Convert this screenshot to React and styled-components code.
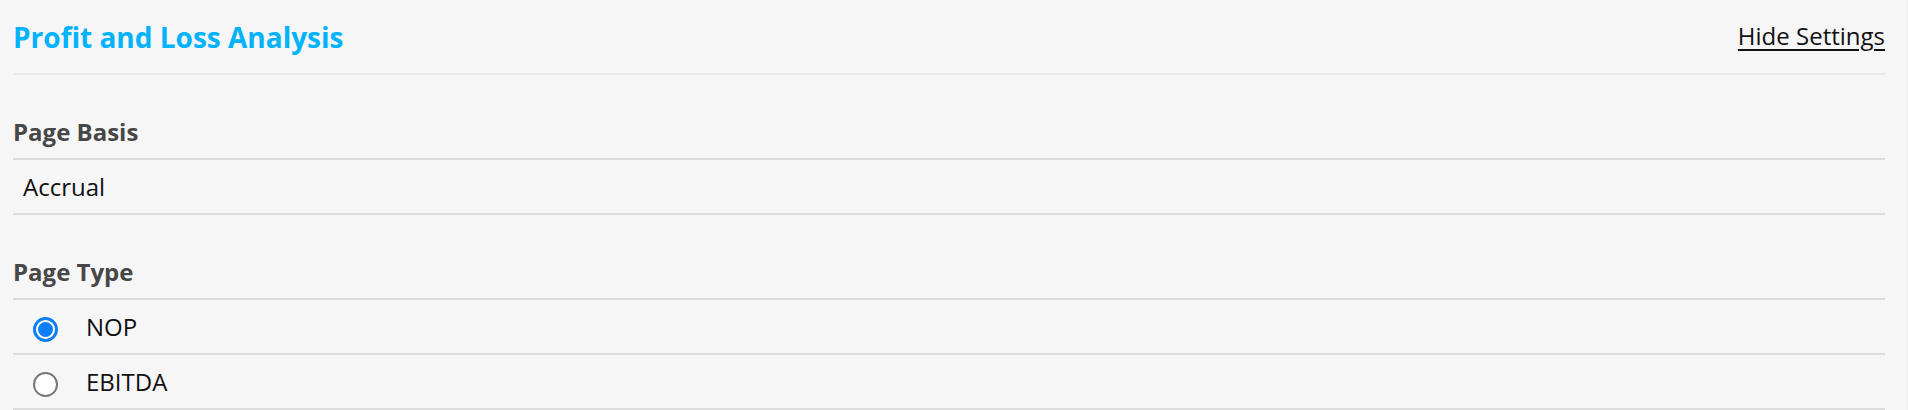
import React, { useState } from "react";
import styled, { createGlobalStyle } from "styled-components";

const GlobalStyle = createGlobalStyle`
  html, body {
    margin: 0;
    padding: 0;
    background: #f6f6f6;
  }
  body {
    font-family: "Open Sans", "Noto Sans", sans-serif;
  }
`;

const Page = styled.div`
  box-sizing: border-box;
  height: 410px;
  padding: 0 22px 0 13px;
  background: #f6f6f6;
  border-right: 1px solid #ececec;
  overflow: hidden;
`;

const Header = styled.div`
  display: flex;
  align-items: center;
  justify-content: space-between;
  height: 73px;
  border-bottom: 2px solid #e9e9e9;
`;

const Title = styled.h1`
  margin: 0;
  font-size: 28px;
  font-weight: 700;
  color: #00b3fb;
`;

const HideLink = styled.a`
  margin-bottom: 3px;
  font-size: 24px;
  color: #111;
  text-decoration: underline;
  text-decoration-thickness: 2px;
  text-underline-offset: 4px;
  cursor: pointer;
`;

const Section = styled.div``;

const SectionTitle = styled.div`
  box-sizing: border-box;
  height: 85px;
  display: flex;
  align-items: flex-end;
  padding-bottom: 11px;
  font-size: 24px;
  font-weight: 700;
  color: #474747;
  line-height: 30px;
  border-bottom: 2px solid #dcdcdc;
`;

const Row = styled.label`
  box-sizing: border-box;
  height: 55px;
  display: flex;
  align-items: center;
  gap: 28px;
  padding-left: ${(p) => (p.$radio ? "20px" : "10px")};
  font-size: 24px;
  color: #111;
  border-bottom: 2px solid #dcdcdc;
  cursor: pointer;
`;

const Radio = styled.span`
  box-sizing: border-box;
  width: 25px;
  height: 25px;
  margin-top: 6px;
  border-radius: 50%;
  flex: none;
  border: ${(p) => (p.$checked ? "3px solid #0d7ff6" : "2px solid #777")};
  background: #fff;
  display: flex;
  align-items: center;
  justify-content: center;

  &::after {
    content: "";
    display: ${(p) => (p.$checked ? "block" : "none")};
    width: 15px;
    height: 15px;
    border-radius: 50%;
    background: #0d7ff6;
  }
`;

export default function App() {
  const [type, setType] = useState("NOP");

  return (
    <Page>
      <GlobalStyle />
      <Header>
        <Title>Profit and Loss Analysis</Title>
        <HideLink>Hide Settings</HideLink>
      </Header>

      <Section>
        <SectionTitle>Page Basis</SectionTitle>
        <Row>Accrual</Row>
      </Section>

      <Section>
        <SectionTitle>Page Type</SectionTitle>
        {["NOP", "EBITDA"].map((t) => (
          <Row $radio key={t} onClick={() => setType(t)}>
            <Radio $checked={type === t} />
            {t}
          </Row>
        ))}
      </Section>
    </Page>
  );
}
